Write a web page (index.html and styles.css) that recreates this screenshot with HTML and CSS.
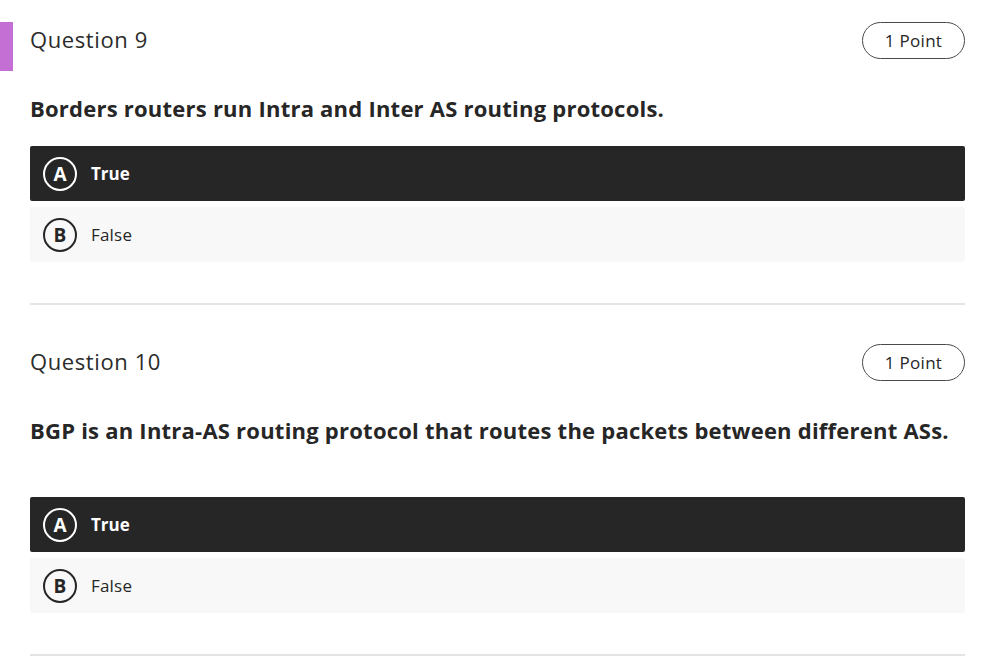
FILE: index.html
```html
<!DOCTYPE html>
<html lang="en">
<head>
<meta charset="utf-8">
<title>Questions</title>
<link rel="stylesheet" href="styles.css">
</head>
<body>
<main class="quiz">
  <section class="question is-current">
    <span class="marker"></span>
    <header class="q-head">
      <h2 class="q-title">Question 9</h2>
      <span class="points">1 Point</span>
    </header>
    <p class="q-text">Borders routers run Intra and Inter AS routing protocols.</p>
    <ul class="options">
      <li class="option is-selected"><span class="letter">A</span><span class="label">True</span></li>
      <li class="option"><span class="letter">B</span><span class="label">False</span></li>
    </ul>
  </section>
  <section class="question">
    <header class="q-head">
      <h2 class="q-title">Question 10</h2>
      <span class="points">1 Point</span>
    </header>
    <p class="q-text q-text--spaced">BGP is an Intra-AS routing protocol that routes the packets between different ASs.</p>
    <ul class="options">
      <li class="option is-selected"><span class="letter">A</span><span class="label">True</span></li>
      <li class="option"><span class="letter">B</span><span class="label">False</span></li>
    </ul>
  </section>
</main>
</body>
</html>
```
FILE: styles.css
```css
* { box-sizing: border-box; }
html, body { margin: 0; padding: 0; background: #fff; }
body {
  font-family: "Open Sans", "Liberation Sans", sans-serif;
  color: #262626;
}
.quiz {
  padding: 0 29px 0 30px;
}
.question {
  position: relative;
  padding-top: 22px;
  padding-bottom: 41px;
  border-bottom: 2px solid #e4e4e4;
}
.question + .question {
  padding-top: 39px;
}
.marker {
  position: absolute;
  left: -30px;
  top: 22px;
  width: 13px;
  height: 49px;
  background: #c36fd4;
}
.q-head {
  display: flex;
  justify-content: space-between;
  align-items: center;
  height: 37px;
}
.q-title {
  margin: 0;
  padding-bottom: 4px;
  font-size: 22px;
  font-weight: 400;
  letter-spacing: 0.6px;
  line-height: 30px;
  color: #2b2b2b;
}
.points {
  display: inline-flex;
  align-items: center;
  justify-content: center;
  width: 103px;
  height: 37px;
  border: 1px solid #4a4a4a;
  border-radius: 19px;
  font-size: 17px;
  letter-spacing: 0.3px;
  color: #262626;
}
.q-text {
  margin: 35px 0 24px;
  font-size: 22px;
  font-weight: 700;
  letter-spacing: 0.23px;
  line-height: 28px;
}
.q-text--spaced {
  margin-top: 35px;
  margin-bottom: 53px;
}
.options {
  list-style: none;
  margin: 0;
  padding: 0;
  display: flex;
  flex-direction: column;
  gap: 6px;
}
.option {
  display: flex;
  align-items: center;
  height: 55px;
  padding-left: 13px;
  background: #f8f8f8;
  border-radius: 2px;
  font-size: 17px;
  color: #262626;
}
.option .label { letter-spacing: 0.2px; }
.option.is-selected {
  background: #262626;
  color: #fff;
  font-weight: 700;
}
.option.is-selected .label { letter-spacing: 0; }
.letter {
  display: inline-flex;
  align-items: center;
  justify-content: center;
  width: 34px;
  height: 34px;
  border: 2px solid currentColor;
  border-radius: 50%;
  font-size: 19px;
  font-weight: 700;
  margin-right: 14px;
}
.label { line-height: 24px; }
```
